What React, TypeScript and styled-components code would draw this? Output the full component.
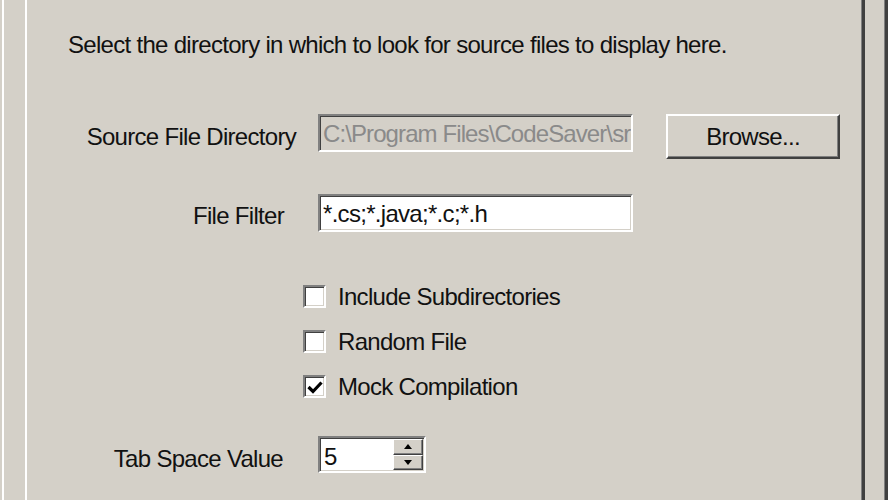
import React, { useState } from "react";
import styled, { createGlobalStyle } from "styled-components";

const GlobalStyle = createGlobalStyle`
  html, body {
    margin: 0;
    padding: 0;
    background: #d4d0c8;
  }
`;

const Window = styled.div`
  width: 888px;
  height: 500px;
  display: flex;
  overflow: hidden;
  background: #d4d0c8;
  font-family: "Liberation Sans", Arial, sans-serif;
  font-size: 24px;
  letter-spacing: -0.7px;
  color: #111;
`;

const OuterEdge = styled.div`
  flex: 1;
  display: flex;
  margin-left: 2px;
  padding: 0 20px 0 21px;
  border-left: 2px solid #ffffff;
  border-right: 3px solid #404040;
  box-shadow: inset -1px 0 0 #808080;
`;

const Panel = styled.div`
  flex: 1;
  display: flex;
  flex-direction: column;
  border-left: 2px solid #ffffff;
  border-right: 3px solid #404040;
  box-shadow: inset -1px 0 0 #808080;
`;

const Description = styled.div`
  margin: 31px 0 0 41px;
  line-height: 28px;
  white-space: nowrap;
`;

const Row = styled.div<{ $mt: number; $h: number }>`
  display: flex;
  align-items: center;
  margin-top: ${(p) => p.$mt}px;
  height: ${(p) => p.$h}px;
`;

const Label = styled.div<{ $pr: number; $dy?: number }>`
  width: 291px;
  box-sizing: border-box;
  padding-right: ${(p) => p.$pr}px;
  padding-top: ${(p) => (p.$dy ?? 0) * 2}px;
  text-align: right;
  white-space: nowrap;
`;

const TextField = styled.input<{ $disabled?: boolean }>`
  width: 315px;
  height: 38px;
  box-sizing: border-box;
  margin: 0;
  padding: 2px 0 0 3px;
  font: inherit;
  letter-spacing: ${(p) => (p.$disabled ? "-0.9px" : "inherit")};
  color: ${(p) => (p.$disabled ? "#8a8a8a" : "#111")};
  background: ${(p) => (p.$disabled ? "#d4d0c8" : "#ffffff")};
  border-style: solid;
  border-width: 2px;
  border-color: #808080 #ffffff #ffffff #808080;
  box-shadow: inset 1px 1px 0 #404040, inset -1px -1px 0 #d4d0c8;
  outline: none;
`;

const Button = styled.button`
  width: 174px;
  height: 45px;
  margin: 0 0 0 33px;
  align-self: flex-start;
  padding: 0;
  font: inherit;
  letter-spacing: inherit;
  color: #111;
  background: #d4d0c8;
  border-style: solid;
  border-width: 2px;
  border-color: #ffffff #404040 #404040 #ffffff;
  box-shadow: inset -1px -1px 0 #808080;
`;

const CheckRow = styled.label`
  display: flex;
  align-items: center;
  height: 45px;
  padding-left: 276px;
  cursor: default;
`;

const CheckBox = styled.span`
  width: 23px;
  height: 23px;
  box-sizing: border-box;
  display: flex;
  align-items: center;
  justify-content: center;
  background: #ffffff;
  border-style: solid;
  border-width: 2px;
  border-color: #808080 #ffffff #ffffff #808080;
  box-shadow: inset 1px 1px 0 #404040, inset -1px -1px 0 #d4d0c8;
  margin-right: 12px;
`;

const Spinner = styled.div`
  width: 108px;
  height: 37px;
  box-sizing: border-box;
  display: flex;
  background: #ffffff;
  border-style: solid;
  border-width: 2px;
  border-color: #808080 #ffffff #ffffff #808080;
  box-shadow: inset 1px 1px 0 #404040, inset -1px -1px 0 #d4d0c8;
  padding: 1px;
`;

const SpinValue = styled.div`
  flex: 1;
  padding: 2px 0 0 3px;
  line-height: 31px;
`;

const SpinButtons = styled.div`
  width: 30px;
  display: flex;
  flex-direction: column;
`;

const SpinButton = styled.div`
  flex: 1;
  display: flex;
  align-items: center;
  justify-content: center;
  box-sizing: border-box;
  background: #d4d0c8;
  border-style: solid;
  border-width: 1px;
  border-color: #ffffff #404040 #404040 #ffffff;
  box-shadow: inset -1px -1px 0 #808080;
`;

const Check = () => (
  <svg width="16" height="14" viewBox="0 0 16 14">
    <path d="M1.5 7 L6 11.5 L14.5 2.5" stroke="#000" strokeWidth="3.2" fill="none" />
  </svg>
);

const Arrow = ({ up }: { up: boolean }) => (
  <svg width="8" height="5" viewBox="0 0 8 5">
    <path d={up ? "M0 5 L4 0 L8 5 Z" : "M0 0 L8 0 L4 5 Z"} fill="#000" />
  </svg>
);

const OPTIONS = ["Include Subdirectories", "Random File", "Mock Compilation"];

const App = () => {
  const [checked, setChecked] = useState<boolean[]>([false, false, true]);
  const [filter, setFilter] = useState("*.cs;*.java;*.c;*.h");

  return (
    <Window>
      <GlobalStyle />
      <OuterEdge>
        <Panel>
          <Description>
            Select the directory in which to look for source files to display here.
          </Description>

          <Row $mt={55} $h={45}>
            <Label $pr={22}>Source File Directory</Label>
            <TextField
              $disabled
              readOnly
              value="C:\Program Files\CodeSaver\src"
              style={{ alignSelf: "flex-start" }}
            />
            <Button>Browse...</Button>
          </Row>

          <Row $mt={35} $h={38}>
            <Label $pr={34} $dy={3}>File Filter</Label>
            <TextField value={filter} onChange={(e) => setFilter(e.target.value)} />
          </Row>

          <div style={{ marginTop: 42 }}>
            {OPTIONS.map((opt, i) => (
              <CheckRow
                key={opt}
                onClick={() =>
                  setChecked(checked.map((c, j) => (j === i ? !c : c)))
                }
              >
                <CheckBox>{checked[i] && <Check />}</CheckBox>
                {opt}
              </CheckRow>
            ))}
          </div>

          <Row $mt={27} $h={37}>
            <Label $pr={35} $dy={4}>Tab Space Value</Label>
            <Spinner>
              <SpinValue>5</SpinValue>
              <SpinButtons>
                <SpinButton>
                  <Arrow up />
                </SpinButton>
                <SpinButton>
                  <Arrow up={false} />
                </SpinButton>
              </SpinButtons>
            </Spinner>
          </Row>
        </Panel>
      </OuterEdge>
    </Window>
  );
};

export default App;
